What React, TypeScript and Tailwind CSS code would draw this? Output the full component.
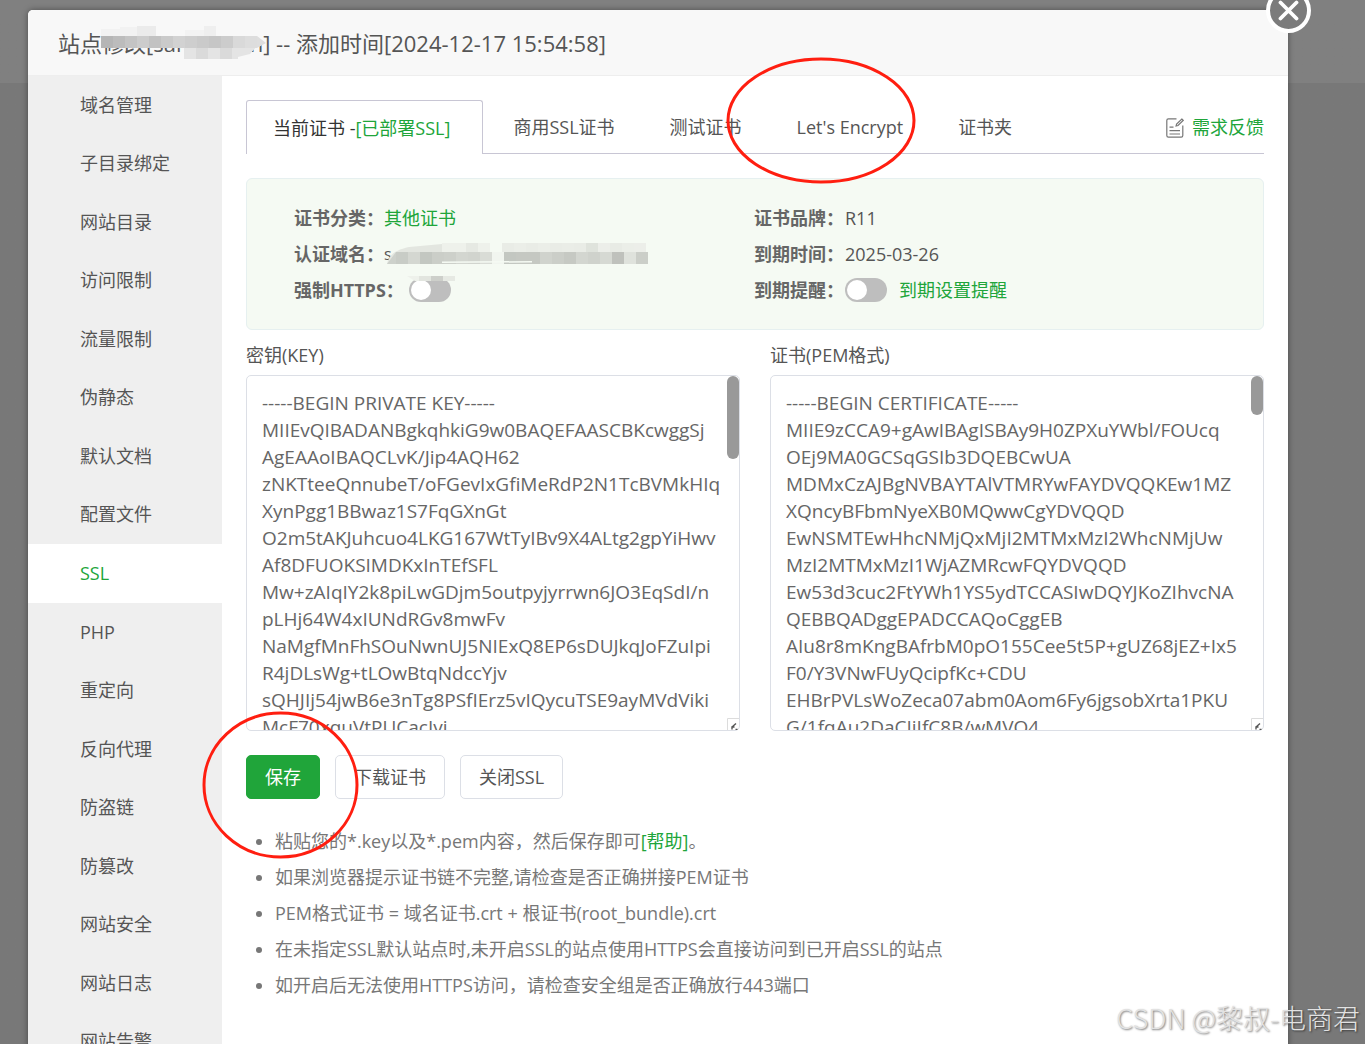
import React, { useState } from "react";

const MENU = [
  "域名管理",
  "子目录绑定",
  "网站目录",
  "访问限制",
  "流量限制",
  "伪静态",
  "默认文档",
  "配置文件",
  "SSL",
  "PHP",
  "重定向",
  "反向代理",
  "防盗链",
  "防篡改",
  "网站安全",
  "网站日志",
  "网站告警",
];

const KEY_TEXT = `-----BEGIN PRIVATE KEY-----
MIIEvQIBADANBgkqhkiG9w0BAQEFAASCBKcwggSj
AgEAAoIBAQCLvK/Jip4AQH62
zNKTteeQnnubeT/oFGevIxGfiMeRdP2N1TcBVMkHIq
XynPgg1BBwaz1S7FqGXnGt
O2m5tAKJuhcuo4LKG167WtTyIBv9X4ALtg2gpYiHwv
Af8DFUOKSIMDKxInTEfSFL
Mw+zAIqIY2k8piLwGDjm5outpyjyrrwn6JO3EqSdI/n
pLHj64W4xIUNdRGv8mwFv
NaMgfMnFhSOuNwnUJ5NIExQ8EP6sDUJkqJoFZuIpi
R4jDLsWg+tLOwBtqNdccYjv
sQHJIj54jwB6e3nTg8PSfIErz5vIQycuTSE9ayMVdViki
McF70xquVtPUCacIvj`;

const PEM_TEXT = `-----BEGIN CERTIFICATE-----
MIIE9zCCA9+gAwIBAgISBAy9H0ZPXuYWbl/FOUcq
OEj9MA0GCSqGSIb3DQEBCwUA
MDMxCzAJBgNVBAYTAlVTMRYwFAYDVQQKEw1MZ
XQncyBFbmNyeXB0MQwwCgYDVQQD
EwNSMTEwHhcNMjQxMjI2MTMxMzI2WhcNMjUw
MzI2MTMxMzI1WjAZMRcwFQYDVQQD
Ew53d3cuc2FtYWh1YS5ydTCCASIwDQYJKoZIhvcNA
QEBBQADggEPADCCAQoCggEB
AIu8r8mKngBAfrbM0pO155Cee5t5P+gUZ68jEZ+Ix5
F0/Y3VNwFUyQcipfKc+CDU
EHBrPVLsWoZeca07abm0Aom6Fy6jgsobXrta1PKU
G/1fqAu2DaCIiIfC8B/wMVO4`;

const TITLE_TOP = ["#f2f2f2", "#f2f2f2", "#ebebeb", "#f3f3f3", "#efefef"];
const TITLE_CELLS = ["#b5b5b5", "#bcbcbc", "#c4c4c4", "#cccccc", "#c2c2c2", "#cacaca", "#d2d2d2", "#cecece", "#cacaca", "#c6c6c6", "#cccccc", "#d9d9d9", "#dddddd"];
const DOMAIN_TOP = ["#eef1eb", "#eef1eb", "#e6e9e3", "#eef1eb", "#f5faf3", "#e9ece6", "#ebeee8", "#e9ece6", "#ebeee8", "#e9ece6", "#eaede7", "#e9ece6", "#dfe3dc", "#eceee9", "#e8ebe5", "#ebeee8", "#eceee9"];
const DOMAIN_CELLS = ["#c8ccc6", "#d4d7d1", "#c3c7c1", "#cbcec8", "#cdd0ca", "#d3d6d0", "#d1d4ce", "#d9dcd6", "#f1f5ef", "#c3c7c1", "#c5c8c2", "#c5c8c2", "#d0d3cd", "#cbcec8", "#c6c9c3", "#d3d6d0", "#cfd2cc", "#d6d9d3", "#bfc1bc", "#dfe2dc", "#cbcec8"];

function FeedbackIcon() {
  return (
    <svg className="h-5 w-[18px]" viewBox="0 0 18 20" fill="none" stroke="#777" strokeWidth="1.2">
      <path d="M10.500 .8H2.400C1.400 .8.800 1.400.800 2.400v15.200c0 1 .6 1.600 1.600 1.600h12.800c1 0 1.600-.6 1.600-1.600V7.500" />
      <path d="M15.800 1l1.400 1.400-5.200 5.100-1.900.5.500-1.900z" />
      <path d="M3.500 9.200h4M3.500 12.600h10.500M3.500 16h10.500" />
    </svg>
  );
}

function Toggle({ id }: { id: string }) {
  const [on, setOn] = useState(false);
  return (
    <input
      id={id}
      type="checkbox"
      checked={on}
      onChange={(e) => setOn(e.target.checked)}
      className="h-6 w-[42px] shrink-0 appearance-none rounded-full bg-[#bebebe] p-[2px] before:block before:size-5 before:rounded-full before:bg-white before:content-[''] checked:bg-[#20a53a] checked:before:ml-[18px]"
    />
  );
}

function CodeBox({ id, label, value, thumb }: { id: string; label: string; value: string; thumb: string }) {
  return (
    <div className="min-w-0 flex-1">
      <label htmlFor={id} className="block h-[45px] leading-[50px]">
        {label}
      </label>
      <div className="relative">
        <textarea
          id={id}
          wrap="off"
          spellCheck={false}
          defaultValue={value}
          className="block h-[356px] w-full resize-none overflow-hidden rounded-[5px] border border-[#dcdfe6] px-[15px] py-[14px] text-[19px] leading-[27px] text-[#666] outline-none"
        />
        <span className={`absolute top-px right-px w-3 rounded-full bg-[#999] ${thumb}`} />
        <svg className="absolute right-px bottom-px size-3" viewBox="0 0 12 12">
          <path d="M.5 12V.5H12" fill="#fff" stroke="#dcdcdc" />
          <path d="M5 9l4-3.500M5 11.500V9h2.500M8.500 11.500h2" fill="none" stroke="#555" strokeWidth="1.400" />
        </svg>
      </div>
    </div>
  );
}

export default function App() {
  const [menu, setMenu] = useState("SSL");
  const [tab, setTab] = useState("current");

  const tabClass = (name: string) =>
    name === tab
      ? "h-[54px] rounded-t-[3px] border border-b-0 border-[#c8c6d4] bg-white pt-px pr-8 pl-[26px] text-[#333]"
      : "h-[54px] border-b border-[#c8c6d4] pt-[2px] pr-[25px] pl-[30px]";

  return (
    <div className="relative h-screen overflow-hidden bg-[#787878] bg-linear-to-b from-[#808080] from-[83px] to-[#787878] to-[83px] pt-[10px] pr-[77px] pl-7 font-['Open_Sans','Noto_Sans_CJK_SC',sans-serif] text-[18px] text-[#555]">
      <div className="relative h-[1100px] rounded-t-[5px] bg-white shadow-[0_0_6px_rgba(0,0,0,0.4)]">
        <header className="relative flex h-[66px] items-center rounded-t-[5px] border-b border-[#eee] bg-[#f8f8f8] pl-[30px]">
          <h1 className="flex pt-[2px] text-[22px] whitespace-pre">
            站点修改[<span className="flex w-[110px] justify-between"><span>san</span><span>n</span></span>] -- 添加时间[2024-12-17 15:54:58]
          </h1>
          <svg className="absolute top-4 left-[72px] h-[34px] w-[166px]" viewBox="0 0 166 34">
            {TITLE_TOP.map((c, i) => (
              <rect key={i} x={[1, 20, 37, 85, 104][i]} y={[3, 1, 0, 4, 0][i]} width={[19, 17, 19, 19, 12][i]} height="10" fill={c} />
            ))}
            <path d="M84 19H158L150 28L138 31V33H84z" fill="#e4e4e4" />
            <path d="M96 22H108V33H96zM120 22H132V33H120z" fill="#dadada" />
            {TITLE_CELLS.map((c, i) => (
              <rect key={i} x={1 + i * 12} y="10" width="12" height="12" fill={c} />
            ))}
            <path d="M157 10L166 17L157 22z" fill="#dedede" />
          </svg>
          <button aria-label="关闭" className="absolute -top-[22px] -right-[23px] size-[45px] rounded-full">
            <svg viewBox="0 0 45 45" className="size-full" fill="none" stroke="#fff">
              <circle cx="22.5" cy="22.5" r="20.5" fill="#7b7b7b" strokeWidth="4" />
              <path d="M14.500 14.500l16 16M30.500 14.500l-16 16" strokeWidth="3.800" strokeLinecap="round" />
            </svg>
          </button>
        </header>

        <div className="flex">
          <nav className="h-[1034px] w-[194px] shrink-0 bg-[#efefef]">
            <ul className="grid h-[995px] auto-rows-fr">
              {MENU.map((item) => (
                <li key={item} className="grid">
                  <a
                    href="#"
                    onClick={() => setMenu(item)}
                    className={`flex items-center pl-[52px] ${item === menu ? "bg-white text-[#20a53a]" : ""}`}
                  >
                    {item}
                  </a>
                </li>
              ))}
            </ul>
          </nav>

          <main className="min-w-0 flex-1 p-6">
            <div className="flex">
              <button onClick={() => setTab("current")} className={tabClass("current")}>
                当前证书 -<span className="text-[#20a53a]">[已部署SSL]</span>
              </button>
              <button onClick={() => setTab("paid")} className={tabClass("paid")}>商用SSL证书</button>
              <button onClick={() => setTab("test")} className={tabClass("test")}>测试证书</button>
              <button onClick={() => setTab("le")} className={tabClass("le")}>Let's Encrypt</button>
              <button onClick={() => setTab("folder")} className={tabClass("folder")}>证书夹</button>
              <div className="flex flex-1 items-center justify-end gap-2 border-b border-[#c8c6d4] pt-[2px]">
                <FeedbackIcon />
                <a href="#" className="text-[#20a53a]">需求反馈</a>
              </div>
            </div>

            <section className="mt-6 grid h-[152px] grid-cols-[460px_1fr] rounded-[6px] border border-[#e6f0f0] bg-[#f5faf3] py-[21px] pl-[47px] leading-9">
              <div>
                <div className="flex h-9">
                  <b className="w-[90px] text-[#666]">证书分类：</b>
                  <a href="#" className="text-[#20a53a]">其他证书</a>
                </div>
                <div className="relative flex h-9">
                  <b className="w-[90px] text-[#666]">认证域名：</b>
                  <span className="text-[16px]">s</span>
                  <svg className="absolute top-[7px] left-[93px] h-[21px] w-[262px]" viewBox="0 0 262 21">
                    <path d="M0 21C2 12 8 7 22 4L55 1V12H10V21z" fill="#e3e6e0" />
                    {DOMAIN_TOP.map((c, i) => (
                      <rect key={i} x={55 + i * 12} y="0" width="12" height="9" fill={c} />
                    ))}
                    <path d="M0 21L9 9V21z" fill="#cdd1cb" />
                    {DOMAIN_CELLS.map((c, i) => (
                      <rect key={i} x={9 + i * 12} y="9" width="12" height="12" fill={c} />
                    ))}
                    <path d="M55 18.500L145 18V19.500L55 20z" fill="#f5faf3" />
                  </svg>
                </div>
                <div className="relative flex h-9 items-center">
                  <label htmlFor="force-https" className="w-[115px] font-bold text-[#666]">强制HTTPS：</label>
                  <Toggle id="force-https" />
                  <svg className="absolute top-[4px] left-[113px] h-[5px] w-12" viewBox="0 0 48 5">
                    <path d="M0 0H12V5H8z" fill="#eef1eb" />
                    <path d="M12 0H24V5H12z" fill="#e2e5df" />
                    <path d="M24 0H36V5H24z" fill="#cdcfca" />
                    <path d="M36 0H48V5H36z" fill="#e6e9e3" />
                  </svg>
                </div>
              </div>
              <div>
                <div className="flex h-9">
                  <b className="w-[91px] text-[#666]">证书品牌：</b>
                  <span>R11</span>
                </div>
                <div className="flex h-9">
                  <b className="w-[91px] text-[#666]">到期时间：</b>
                  <span>2025-03-26</span>
                </div>
                <div className="flex h-9 items-center">
                  <label htmlFor="expire-notice" className="w-[91px] font-bold text-[#666]">到期提醒：</label>
                  <Toggle id="expire-notice" />
                  <a href="#" className="ml-3 text-[#20a53a]">到期设置提醒</a>
                </div>
              </div>
            </section>

            <div className="flex gap-[30px]">
              <CodeBox id="key" label="密钥(KEY)" value={KEY_TEXT} thumb="h-[83px]" />
              <CodeBox id="pem" label="证书(PEM格式)" value={PEM_TEXT} thumb="h-[39px]" />
            </div>

            <div className="mt-6 flex gap-[15px]">
              <button className="h-11 rounded-[5px] border border-[#20a53a] bg-[#20a53a] px-[18px] text-white">保存</button>
              <button className="h-11 rounded-[5px] border border-[#dcdfe6] px-[18px]">下载证书</button>
              <button className="h-11 rounded-[5px] border border-[#dcdfe6] px-[18px]">关闭SSL</button>
            </div>

            <ul className="mt-6 list-disc pl-[29px] leading-9 text-[#777]">
              <li>粘贴您的*.key以及*.pem内容，然后保存即可<a href="#" className="text-[#20a53a]">[帮助]</a>。</li>
              <li>如果浏览器提示证书链不完整,请检查是否正确拼接PEM证书</li>
              <li>PEM格式证书 = 域名证书.crt + 根证书(root_bundle).crt</li>
              <li>在未指定SSL默认站点时,未开启SSL的站点使用HTTPS会直接访问到已开启SSL的站点</li>
              <li>如开启后无法使用HTTPS访问，请检查安全组是否正确放行443端口</li>
            </ul>
          </main>
        </div>
      </div>

      {/* hand-drawn marks around the Let's Encrypt tab and the save button */}
      <svg className="pointer-events-none absolute top-[57px] left-[726px] h-[127px] w-[190px]" viewBox="0 0 190 127">
        <ellipse cx="95" cy="63.500" rx="93" ry="61.500" fill="none" stroke="#ff1e10" strokeWidth="3" />
      </svg>
      <svg className="pointer-events-none absolute top-[711px] left-[202px] h-[148px] w-[157px]" viewBox="0 0 157 148">
        <ellipse cx="78.500" cy="74" rx="76.500" ry="72" fill="none" stroke="#ff1e10" strokeWidth="3" />
      </svg>
      <p className="pointer-events-none absolute right-[5px] bottom-0 font-['Noto_Sans_CJK_SC',sans-serif] text-[27px] leading-[52px] font-light text-[#e2e2e2] [text-shadow:1px_1px_2px_rgba(0,0,0,0.55)]">
        CSDN @黎叔-电商君
      </p>
    </div>
  );
}
